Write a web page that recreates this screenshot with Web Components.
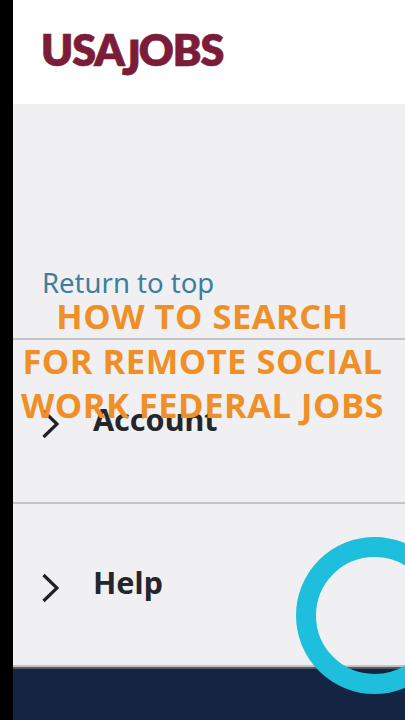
<!DOCTYPE html>
<html lang="en"><head><meta charset="utf-8"><title>USAJOBS</title>
<style>
html,body{margin:0;height:720px;overflow:hidden;background:#000}
</style></head><body>
<video-frame>
  <site-header slot="header"></site-header>
  <return-link slot="return">Return to top</return-link>
  <nav-row slot="rows" style="--row-h:164px">Account</nav-row>
  <nav-row slot="rows" style="--row-h:163px">Help</nav-row>
  <video-caption slot="overlay"></video-caption>
  <focus-ring slot="overlay"></focus-ring>
</video-frame>
<script>
class Base extends HTMLElement{
  constructor(){super();this.attachShadow({mode:'open'}).innerHTML=this.constructor.html}
}
class VideoFrame extends Base{static html=`<style>
:host{display:flex;width:405px;height:720px;position:relative;overflow:hidden;background:#000;font-family:"Noto Sans",sans-serif}
.strip{width:13px;flex:none;background:#000}
main{flex:1;display:flex;flex-direction:column;background:#f0eff2;min-width:0}
.rows{display:flex;flex-direction:column}
footer{flex:1;background:#142543;border-top:2px solid #55585f}
.over{position:absolute;inset:0;pointer-events:none}
</style><div class="strip"></div><main><slot name="header"></slot><slot name="return"></slot><div class="rows"><slot name="rows"></slot></div><footer></footer></main><div class="over"><slot name="overlay"></slot></div>`}
class SiteHeader extends Base{static html=`<style>
:host{display:flex;align-items:flex-start;height:104px;background:#fff;padding:25px 0 0 28px;box-sizing:border-box}
.logo{font:800 43px/1.15 Lato,sans-serif;letter-spacing:-1px;color:#7b1c38;-webkit-text-stroke:.7px #7b1c38;white-space:nowrap}
.j{display:inline-block;margin:0 -1px 0 -2px;transform:translateY(7px) scaleY(1.12)}
</style><span class="logo">USA<span class="j">J</span>OBS</span>`}
class ReturnLink extends Base{static html=`<style>
:host{display:flex;align-items:flex-start;height:236px;box-sizing:border-box;padding:162px 0 0 29px;border-bottom:2px solid #c3c3c6;font:400 27.5px/1.2 "Noto Sans",sans-serif;color:#3f7d9c}
</style><slot></slot>`}
class NavRow extends Base{static html=`<style>
:host{display:flex;align-items:center;gap:34px;height:var(--row-h);box-sizing:border-box;padding:0 0 0 29px;border-bottom:2px solid #c3c3c6;font:700 30.5px/1.2 "Noto Sans",sans-serif;color:#24262b}
:host(:last-child){border-bottom:0}
svg{width:17px;height:30px;flex:none;margin-top:6px}
span{margin-bottom:4px}
</style><svg viewBox="0 0 17 30"><path d="M1.5 2 L15 15 L1.5 28" fill="none" stroke="#1f2126" stroke-width="3.2"/></svg><span><slot></slot></span>`}
class VideoCaption extends Base{static html=`<style>
:host{position:absolute;left:0;top:294px;width:405px;text-align:center;font:700 34.5px/44.5px "Open Sans",sans-serif;color:#ee8f28;letter-spacing:.5px}
div{white-space:nowrap}
</style><div>HOW TO SEARCH</div><div>FOR REMOTE SOCIAL</div><div>WORK FEDERAL JOBS</div>`}
class FocusRing extends Base{static html=`<style>
:host{position:absolute;left:296px;top:537px;width:157px;height:157px;box-sizing:border-box;border-radius:50%;border:20px solid #1ebfdc}
</style>`}
customElements.define('video-frame',VideoFrame);
customElements.define('site-header',SiteHeader);
customElements.define('return-link',ReturnLink);
customElements.define('nav-row',NavRow);
customElements.define('video-caption',VideoCaption);
customElements.define('focus-ring',FocusRing);
</script>
</body></html>
